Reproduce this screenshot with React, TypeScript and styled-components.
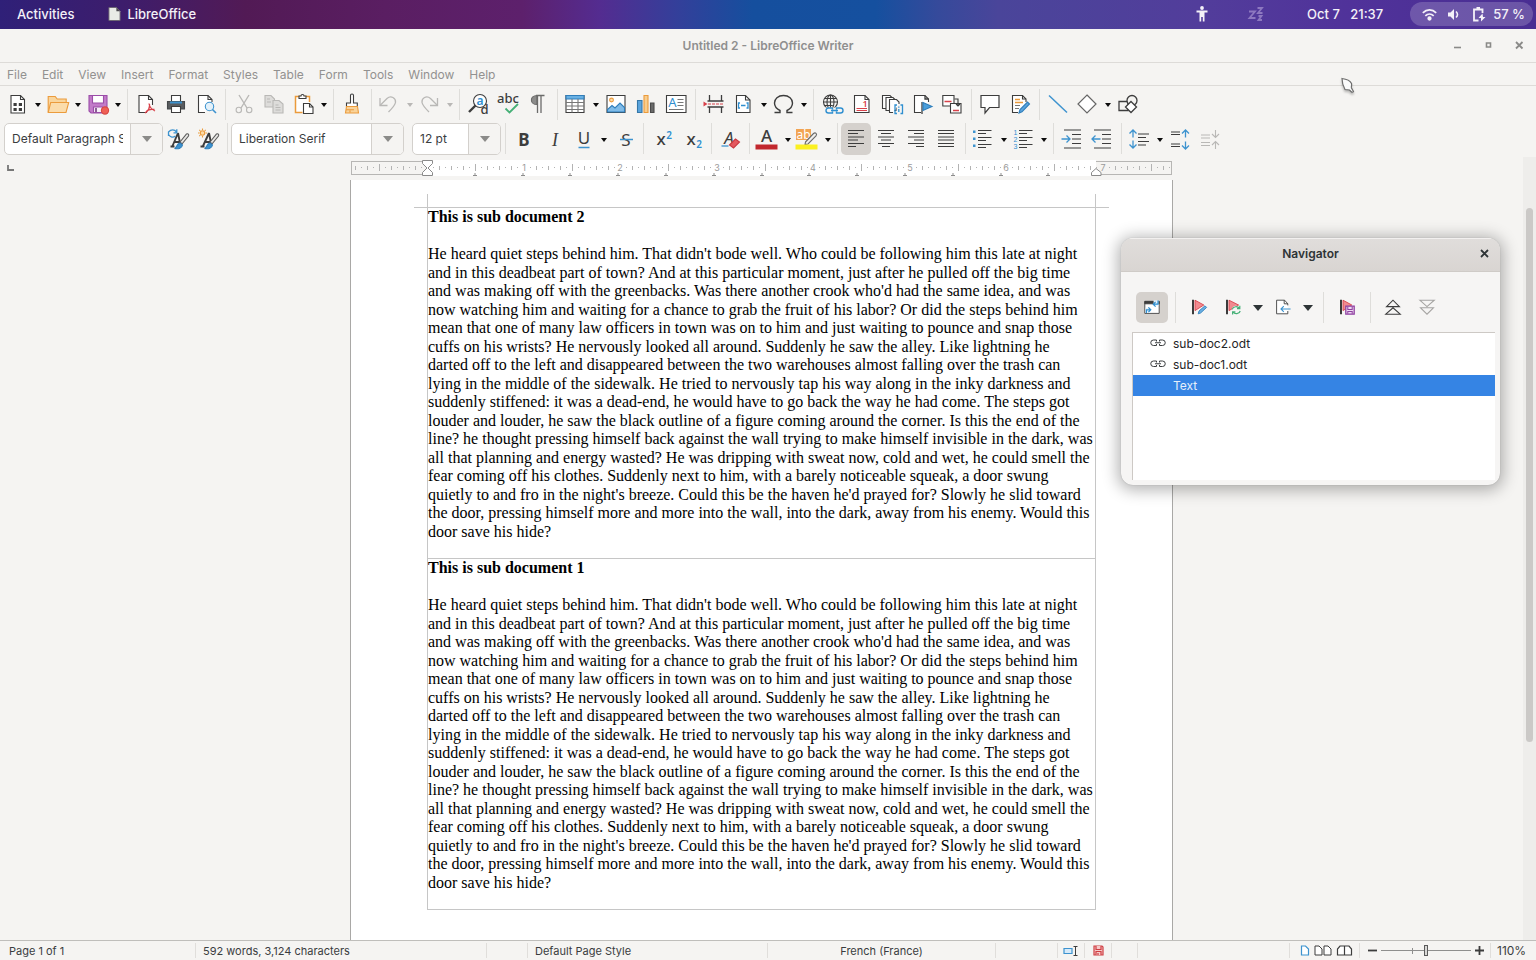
import React from "react";
import styled, { createGlobalStyle } from "styled-components";

const ui = `Inter, "Liberation Sans", sans-serif`;
const ink = "#3d3d3d";
const blue = "#3d93cf";
const red = "#d8414a";
const grey = "#b9b8b6";
const orange = "#eb9b3c";

const Global = createGlobalStyle`
  * { box-sizing: border-box; }
  html, body, #root { height: 100%; }
  body { margin: 0; overflow: hidden; font-family: ${ui}; background: #f5f4f2; }
  button, input { font-family: inherit; }
  button { border: 0; padding: 0; margin: 0; background: none; color: inherit; }
  svg { display: block; flex: none; overflow: visible; }
  p, h2, ul { margin: 0; padding: 0; }
`;

const Desktop = styled.div`
  position: relative;
  display: flex;
  flex-direction: column;
  height: 100vh;
  overflow: hidden;
`;

/* ---------- Desktop top panel ---------- */

const Panel = styled.header`
  display: flex;
  align-items: center;
  height: 29px;
  padding: 0 3px 1px 17px;
  color: #f4f1f8;
  background: linear-gradient(
    90deg,
    #2f2078 0%,
    #3d1d6c 8%,
    #521a55 16%,
    #5a1e62 25%,
    #5d206c 34%,
    #542c90 39%,
    #343f9a 44%,
    #154f9e 49%,
    #15509f 57%,
    #354a9b 61%,
    #4a459a 65%,
    #523d9b 78%,
    #50329a 88%,
    #492e92 100%
  );
`;

const PanelButton = styled.button<{ $gap?: number }>`
  display: flex;
  align-items: center;
  gap: 6px;
  margin-right: ${(p) => p.$gap ?? 0}px;
  font-size: 13px;
  font-weight: 500;
  white-space: nowrap;
`;

const Spacer = styled.div`
  flex: 1;
`;

const Tray = styled(PanelButton)`
  height: 24px;
  padding: 0 8px 0 12px;
  gap: 7px;
  border-radius: 12px;
  background: rgba(255, 255, 255, 0.19);
`;

/* ---------- Window chrome ---------- */

const TitleBar = styled.div`
  position: relative;
  display: flex;
  align-items: center;
  justify-content: center;
  height: 34px;
  padding-bottom: 1px;
  border-bottom: 1px solid #dddbd8;
  color: #8f8f8f;
  font-size: 12px;
  font-weight: 600;
`;

const WindowButtons = styled.div`
  position: absolute;
  right: 10px;
  top: 9px;
  display: flex;
  gap: 17px;
`;

const MenuBar = styled.nav`
  display: flex;
  align-items: center;
  gap: 15px;
  height: 23px;
  padding: 1px 0 0 7px;
  border-bottom: 1px solid #dddbd8;
  color: #929190;
`;

const MenuItem = styled.button`
  font-size: 12px;
  line-height: 20px;
`;

const Toolbar = styled.div<{ $height: number; $start: number; $bottom?: number }>`
  display: flex;
  align-items: center;
  height: ${(p) => p.$height}px;
  padding: 0 0 ${(p) => p.$bottom ?? 0}px ${(p) => p.$start}px;
`;

const ToolButton = styled.button<{ $active?: boolean }>`
  display: flex;
  align-items: center;
  justify-content: center;
  flex: none;
  width: 30px;
  height: 32px;
  border-radius: 5px;
  background: ${(p) => (p.$active ? "#d5d1cd" : "none")};
`;

const ArrowButton = styled.button<{ $dim?: boolean; $wide?: boolean }>`
  display: flex;
  align-items: center;
  justify-content: center;
  flex: none;
  width: ${(p) => (p.$wide ? 16 : 10)}px;
  height: 32px;
  padding-top: 2px;
  color: ${(p) => (p.$dim ? grey : p.$wide ? "#2e3436" : "#0c0c0c")};
`;

const Rule = styled.span<{ $width?: number }>`
  flex: none;
  width: ${(p) => p.$width ?? 8}px;
  height: 31px;
  background: linear-gradient(#deddda, #deddda) center / 1px 100% no-repeat;
`;

const Combo = styled.div<{ $width: number; $gap?: number }>`
  display: flex;
  flex: none;
  width: ${(p) => p.$width}px;
  height: 32px;
  margin-right: ${(p) => p.$gap ?? 0}px;
  border: 1px solid #d3d0cc;
  border-radius: 5px;
  background: #fff;
  overflow: hidden;
`;

const ComboInput = styled.input`
  flex: 1;
  min-width: 0;
  border: 0;
  outline: 0;
  padding: 0 7px;
  font-size: 12px;
  color: #3a3d3f;
  background: transparent;
`;

const ComboDrop = styled.button`
  display: flex;
  align-items: center;
  justify-content: center;
  width: 32px;
  border-left: 1px solid #d3d0cc;
  color: #8b8b89;
  background: #f5f4f2;
`;

/* ---------- Work area ---------- */

const WorkArea = styled.main`
  display: flex;
  flex: 1;
  min-height: 0;
`;

const Canvas = styled.div`
  position: relative;
  display: flex;
  flex: 1;
  flex-direction: column;
  align-items: center;
  min-width: 0;
  padding-top: 3px;
  overflow: hidden;
`;

const TabStop = styled.button`
  position: absolute;
  left: 7px;
  top: 8px;
`;

const RulerRow = styled.div`
  height: 20px;
`;

const Page = styled.article`
  flex: 1 0 auto;
  width: 823px;
  padding: 14px 63px 0;
  border: 1px solid #a9a8a6;
  border-width: 0 1px;
  background: #fff;
`;

const MarginCorners = styled.div`
  height: 13px;
  margin: 0 13px;
  border: 1px solid #c6c6c6;
  border-width: 0 1px;
`;

const MarginLine = styled.div`
  height: 1px;
  background: #c6c6c6;
`;

const Section = styled.section`
  display: grid;
  grid-auto-rows: 1fr;
  min-height: 351px;
  margin: 0 13px;
  padding-bottom: 17px;
  border: 1px solid #c6c6c6;
  border-top: 0;
  font-family: "Liberation Serif", serif;
  font-size: 16px;
  line-height: 18px;
  color: #000;
  white-space: nowrap;
`;

const Heading = styled.h2`
  font-size: 16px;
  font-weight: bold;
`;

const Paragraph = styled.p`
  display: contents;
`;

const Line = styled.span`
  display: block;
`;

const ScrollTrack = styled.div`
  width: 13px;
  padding: 51px 3px 0;
  background: #eeedeb;
`;

const ScrollThumb = styled.div`
  height: 534px;
  border-radius: 4px;
  background: #cbc9c7;
`;

/* ---------- Status bar ---------- */

const StatusBar = styled.footer`
  display: flex;
  align-items: center;
  height: 20px;
  border-top: 1px solid #bfbebb;
  color: #3a3d3f;
  font-size: 11px;
  white-space: nowrap;
`;

const StatusCell = styled.div<{ $w: number; $grow?: boolean; $center?: boolean; $pad?: number }>`
  display: flex;
  align-items: center;
  justify-content: ${(p) => (p.$center ? "center" : "flex-start")};
  flex: ${(p) => (p.$grow ? 1 : 0)} 0 ${(p) => p.$w}px;
  height: 15px;
  padding-left: ${(p) => p.$pad ?? 0}px;
  border-right: 1px solid #e0dedb;

  &:last-child {
    border-right: 0;
    font-size: 12px;
  }
`;

const ViewButton = styled.button<{ $gap?: number }>`
  margin-right: ${(p) => p.$gap ?? 0}px;
`;

const Zoom = styled.input`
  appearance: none;
  width: 90px;
  height: 12px;
  margin: 0 4px;
  background:
    linear-gradient(#8f8f8e, #8f8f8e) 31px center / 1px 6px no-repeat,
    linear-gradient(#8f8f8e, #8f8f8e) center / 100% 1px no-repeat;

  &::-webkit-slider-thumb {
    appearance: none;
    width: 4px;
    height: 11px;
    border: 1px solid #5a5a5a;
    background: #d9d8d6;
  }
`;

/* ---------- Navigator ---------- */

const Navigator = styled.aside`
  position: absolute;
  right: 36px;
  top: 238px;
  width: 379px;
  height: 247px;
  display: flex;
  flex-direction: column;
  border-radius: 12px;
  background: #f6f5f4;
  box-shadow: 0 2px 16px 3px rgba(0, 0, 0, 0.3), 0 0 1px rgba(0, 0, 0, 0.3);
  overflow: hidden;
`;

const NavTitle = styled.div`
  display: grid;
  grid-template-columns: 32px 1fr 32px;
  align-items: center;
  justify-items: center;
  flex: none;
  height: 34px;
  padding-bottom: 3px;
  border-bottom: 1px solid #cfcbc7;
  border-top: 1px solid #f2f0ef;
  background: linear-gradient(#e0dddb, #d9d5d2);
  color: #2e3436;
  font-size: 12px;
  font-weight: 600;
`;

const NavTools = styled.div`
  display: flex;
  align-items: center;
  height: 60px;
  padding: 10px 0 0 15px;
`;

const NavToolButton = styled(ToolButton)<{ $narrow?: boolean }>`
  width: ${(p) => (p.$narrow ? 34 : 32)}px;
  height: 31px;
`;

const NavList = styled.ul`
  flex: 1;
  margin: 0 5px 5px 11px;
  border: 1px solid #cdc9c5;
  border-width: 1px 0 0 1px;
  background: #fff;
  list-style: none;
`;

const NavRow = styled.li<{ $selected?: boolean }>`
  display: grid;
  grid-template-columns: 16px auto;
  justify-content: start;
  align-items: center;
  gap: 7px;
  height: 21px;
  padding: 0 0 1px 17px;
  font-size: 12px;
  color: ${(p) => (p.$selected ? "#e6effb" : "#1f2426")};
  background: ${(p) => (p.$selected ? "#3584e4" : "transparent")};
`;

const Pointer = styled.div`
  position: absolute;
  right: 181px;
  top: 77px;
  filter: drop-shadow(0 2px 1px rgba(0, 0, 0, 0.25));
`;

/* ---------- Icons ---------- */

const Icon = ({ children, size = 20 }: { children: React.ReactNode; size?: number }) => (
  <svg width={size} height={size} viewBox="0 0 20 20" fill="none" stroke={ink} strokeWidth="1.1" aria-hidden="true">
    {children}
  </svg>
);

const Arrow = ({ width = 6, height = 4 }: { width?: number; height?: number }) => (
  <svg width={width} height={height} viewBox="0 0 10 6" preserveAspectRatio="none" fill="currentColor" aria-hidden="true">
    <path d="M0 0h10L5 6z" />
  </svg>
);

const Glyph = ({ x, y, size, fill = ink, weight, italic, children, family = "Noto Sans" }: {
  x: number; y: number; size: number; fill?: string; weight?: number; italic?: boolean; children: string; family?: string;
}) => (
  <text x={x} y={y} fontSize={size} fill={fill} stroke="none" fontWeight={weight} fontStyle={italic ? "italic" : undefined} fontFamily={`"${family}", sans-serif`} textAnchor="middle">
    {children}
  </text>
);

const icons: Record<string, React.ReactNode> = {
  new: (
    <>
      <path d="M3 1.5h9.500l4 4v13.500H3z" fill="#fff" />
      <path d="M12.500 1.500v4h4" />
      <path d="M5.500 9h3.200v3H5.500zM10.800 9H14v3h-3.200zM5.500 14h3.200v3H5.500zM10.800 14H14v3h-3.200z" fill={ink} stroke="none" />
    </>
  ),
  open: (
    <>
      <path d="M.2 18V2.500h7l2 2.500h9v3" fill="#f9d59c" stroke={orange} />
      <path d="M.2 18.500l2.500-10h18L18 18.500z" fill="#fbdcab" stroke={orange} />
    </>
  ),
  save: (
    <>
      <path d="M1 1.500h18v17.500H3l-2-2z" fill="#c27bc9" stroke="#9b4ea8" />
      <path d="M4.500 1.500h11v7.500h-11z" fill="#fff" stroke="#9b4ea8" />
      <path d="M5.500 13h9v5.500h-9z" fill="#f7eef8" stroke="#9b4ea8" />
      <path d="M8 14v4" stroke="#703a7c" strokeWidth="1.600" />
      <circle cx="17" cy="16.500" r="3.600" fill="#ef5f56" stroke="#d94841" />
    </>
  ),
  pdf: (
    <>
      <path d="M11 18.500H3v-17h9.500l4 4V11" fill="#fff" />
      <path d="M12.500 1.500v4h4" />
      <path d="M13 9.500c.5 3 2.500 6 6 7.500M13.500 10c.5 3.500-1.500 7-4.500 9M10.500 17c2.500-2 5-2 8-1.500" stroke={red} strokeWidth="1.300" />
    </>
  ),
  print: (
    <>
      <path d="M5.500 7.500V1.500h9v6" fill="#fff" />
      <path d="M1.500 7.500h17v7.500h-17z" fill="#5a5d60" stroke="#45484a" />
      <path d="M4 8.500h12" stroke={blue} strokeWidth="2" />
      <path d="M5.500 12.500h9v6h-9z" fill="#fff" />
    </>
  ),
  preview: (
    <>
      <path d="M9 18.500H2.500v-17h9.500l4 4V8" fill="#fff" />
      <path d="M12 1.500v4h4" />
      <circle cx="13.500" cy="12.500" r="4.200" fill="#e3f1fa" stroke={blue} />
      <path d="M16.500 15.500l3.500 3.500" stroke={blue} strokeWidth="1.600" />
    </>
  ),
  cut: (
    <g stroke={grey}>
      <path d="M5 1l8 13M15 1L7 14" strokeWidth="1.400" />
      <circle cx="4.800" cy="16" r="2.700" />
      <circle cx="15.200" cy="16" r="2.700" />
    </g>
  ),
  copy: (
    <g stroke={grey} fill="#dddcda">
      <path d="M1 1.500h6l3.500 3.500v8H1z" />
      <path d="M9 6.500h6l4 3.500v9H9z" />
      <path d="M3 5h3M3 8h4M11.500 11h3M11.500 13.500h5M11.500 16h5" />
    </g>
  ),
  paste: (
    <>
      <path d="M8.500 18.500H1.500v-16h14V8" fill="#fff" stroke={orange} strokeWidth="1.500" />
      <path d="M5 4.500V2h2c0-2 3-2 3 0h2v2.500z" fill="#fff" />
      <path d="M9.500 9.500h6l3.500 3.500v6.500H9.500z" fill="#fff" />
      <path d="M15.500 9.500V13H19" />
    </>
  ),
  brush: (
    <>
      <path d="M8.500 9V1.500c0-2 3-2 3 0V9h3.800v3.500H4.500V9z" fill="#fff" />
      <path d="M4.500 12.500l-1 6.500h13l-1-6.500z" fill="#f9d39a" stroke={orange} />
      <path d="M4 15.800h8M8 18.500v-2" stroke={orange} />
    </>
  ),
  undo: (
    <g stroke={grey} strokeWidth="1.300">
      <path d="M0 4v7.500h7.500" />
      <path d="M0 11.500L7 4.500c4-3.500 9-.5 8.500 4-.5 3-3.500 6-7 9.500" />
    </g>
  ),
  redo: (
    <g stroke={grey} strokeWidth="1.300">
      <path d="M17.500 4v7.500H10" />
      <path d="M17.500 11.500l-7-7c-4-3.500-9-.5-8.500 4 .5 3 3.500 6 7 9.500" />
    </g>
  ),
  find: (
    <>
      <circle cx="12" cy="7" r="6.500" fill="#fff" />
      <path d="M7.500 11.500L1 18" strokeWidth="2.400" />
      <Glyph x={12} y={10.500} size={12} fill="#2f8fd0" weight={600}>a</Glyph>
      <Glyph x={16.500} y={19.500} size={13} weight={500}>d</Glyph>
    </>
  ),
  spell: (
    <>
      <Glyph x={10} y={8.500} size={13} weight={500}>abc</Glyph>
      <path d="M7.500 14.500l4 4 8.500-8.500" stroke="#45b076" strokeWidth="1.800" />
    </>
  ),
  pilcrow: (
    <>
      <path d="M9 10.500C1.500 10.500 1.500 1.500 9 1.500z" fill="#8c8c8b" stroke="#6b6b6a" />
      <path d="M9.500 19V1.500M13 19V1.500M8 1.500h8.500" stroke="#6b6b6a" strokeWidth="1.300" />
    </>
  ),
  table: (
    <>
      <path d="M0 1.500h18v17H0z" fill="#fff" />
      <path d="M0 1.500h18v3.500H0z" fill="#68b0e3" stroke="#2f7ebb" />
      <path d="M0 8.500h18M0 12h18M0 15.500h18M6 5v13.500M12 5v13.500" stroke="#777" />
    </>
  ),
  image: (
    <>
      <path d="M1 1.500h18v17H1z" fill="#fff" />
      <circle cx="5.500" cy="6" r="1.900" fill="#fbdcab" stroke={orange} />
      <path d="M1.500 18v-2.500l4.500-4 3 2.500 5-5 4.500 4.500V18z" fill="#7fbbe8" stroke="#2f7ebb" />
    </>
  ),
  chart: (
    <>
      <path d="M1.500 6.500h4.500v12H1.500z" fill="#5ba4dd" stroke="#3577a8" />
      <path d="M8 1.500h4v17H8z" fill="#f9cd8c" stroke={orange} />
      <path d="M14.500 9h3.500v9.500h-3.500z" fill="#6a6a6a" stroke="#4a4a4a" />
    </>
  ),
  textbox: (
    <>
      <path d="M.5 1.500h19.500v17H.5z" fill="#fff" />
      <Glyph x={6.500} y={13} size={13} fill="#2f8fd0">A</Glyph>
      <path d="M11.500 5.500h6M11.500 8.500h6M11.500 11.500h6M3 15.500h14.500" stroke="#777" />
    </>
  ),
  pagebreak: (
    <>
      <path d="M5.500 1v6h12V1M5.500 19v-6h12v6M3.500 7h16M3.500 13h16" strokeWidth="1.300" />
      <path d="M4 10h16" stroke={red} strokeDasharray="3 1" />
      <path d="M-.5 7.500v5L3.500 10z" fill={red} stroke="none" />
    </>
  ),
  field: (
    <>
      <path d="M2.500 1.500h9l4.500 4.500v12.500H2.500z" fill="#fff" />
      <path d="M11.500 1.500V6H16" />
      <path d="M6 9H4.500v5H6M12.500 9H14v5h-1.500M7 11.500h4.500" stroke="#2f8fd0" strokeWidth="1.300" />
    </>
  ),
  omega: (
    <path d="M.5 18.500H6v-2C2 14.500.5 12 .5 9 .5 5 4 1.500 9.500 1.500S18.500 5 18.500 9c0 3-1.500 5.500-5.500 7.500v2h5.500" strokeWidth="1.400" />
  ),
  link: (
    <>
      <circle cx="8.500" cy="8" r="7" />
      <path d="M8.500 1v13.500M1.500 8h14M2.800 4.500h11.500M2.800 11.500h8" />
      <ellipse cx="8.500" cy="8" rx="3.500" ry="7" />
      <path d="M3 13.500h18v6H3z" fill="#f5f4f2" stroke="none" />
      <path d="M10.500 14h-4a2.500 2.500 0 000 5h4v-1.500M10.500 14v1.500M9 16.500h7M14.500 15.500V14h4a2.500 2.500 0 010 5h-4v-1.500" stroke="#2f8fd0" strokeWidth="1.400" />
    </>
  ),
  footnote: (
    <>
      <path d="M2.500 1.500h10.500l4 4v13H2.500z" fill="#fff" />
      <path d="M13 1.500v4h4" />
      <Glyph x={13} y={13} size={9} fill={red} weight={600}>1</Glyph>
      <path d="M4.500 14.500h10.500M4.500 16.500h10.500" stroke={red} />
    </>
  ),
  endnote: (
    <>
      <path d="M.5 1.500h7.500l3 3v10H.5z" fill="#fff" />
      <path d="M4 3.500h7l3 3v10H4z" fill="#fff" />
      <path d="M11 18.500H7.500v-13h7l2.500 2.500v2" fill="#fff" />
      <path d="M15 11h-2v8.500h2M18.500 11h2v8.500h-2M16.800 12.500v1.200M16.800 15v3" stroke="#2f8fd0" strokeWidth="1.300" />
    </>
  ),
  bookmark: (
    <>
      <path d="M9 18.500H2.500v-17h10.500l3.500 3.500v3" fill="#fff" />
      <path d="M13 1.500V5h3.500M10 8v12" strokeWidth="1.300" />
      <path d="M11 8.500l9 4-9 4z" fill="#4a9edb" stroke="#2f7ebb" />
    </>
  ),
  crossref: (
    <>
      <path d="M.8 1.500H12v10.500H.8z" fill="#fff" />
      <path d="M8.500 9.500H19V19H8.500z" fill="#fff" />
      <path d="M2.500 7.500h7M11 16.500h6" stroke={red} strokeWidth="1.500" />
      <path d="M12.500 5h3.500v6M14 10l2 2 2-2" />
    </>
  ),
  comment: <path d="M1 1.500h18v12h-9.500L5 19v-5.500H1z" fill="#fff" strokeWidth="1.200" />,
  track: (
    <>
      <path d="M8 18.500H2.500v-17h10l3.500 3.500v3" fill="#fff" />
      <path d="M12.500 1.500V5h3.500" />
      <path d="M5 5.500h5M5 8.500h8" stroke={orange} strokeWidth="1.300" />
      <path d="M5 11.500h5M5 14.500h4" stroke="#777" />
      <path d="M9 19l1-3.500 7.500-7.500 2 2-7.500 7.800z" fill="#5ba4dd" stroke="#2f7ebb" />
    </>
  ),
  line: <path d="M1 1.500l18 17" stroke={blue} strokeWidth="1.500" />,
  diamond: <path d="M9 1l9 9-9 9-9-9z" fill="#fff" stroke="#666" strokeWidth="1.200" />,
  shapes: (
    <>
      <path d="M1 7.500h9v9H1z" fill="#f5f4f2" strokeWidth="1.300" />
      <circle cx="14" cy="6.500" r="5" fill="#f5f4f2" strokeWidth="1.300" />
      <path d="M13 7.500l5.500 5.500-5.500 5.500L7.500 13z" fill="#fff" strokeWidth="1.300" />
    </>
  ),
  updateStyle: (
    <>
      <path d="M10 4L4.500 17M10 4l2 10M6 13h5M2.500 17.500h4" strokeWidth="1.900" />
      <path d="M.5 7V3C3 .200 6.500 .200 8.500 3M8.800.200V3.800H5.500M.5 5.500c2 3 4.500 3.500 7 1.500" stroke={blue} strokeWidth="1.300" />
      <path d="M12 13l6.500-8c2-1 2.500 1 2 2l-6.500 8z" fill="#e7e6e4" stroke="#5b5b5b" />
      <path d="M6.500 19.500c2 0 2-5 5.500-5.500l2.500 2c-.5 3-4 4.500-8 3.500z" fill="#3d93cf" stroke="#2f7ebb" />
    </>
  ),
  newStyle: (
    <>
      <path d="M11 4L5 17M11 4l2 10M7 13h5M2.500 17.500h4" strokeWidth="1.900" />
      <circle cx="4.500" cy="4" r="2.200" fill="#fbdcab" stroke={orange} />
      <path d="M4.500-.5V1M4.500 7v1.500M0 4h1.500M7.500 4H9M1.300.800l1 1M7.700.800l-1 1M1.300 7.200l1-1" stroke={orange} />
      <path d="M12 13l6.500-8c2-1 2.500 1 2 2l-6.500 8z" fill="#e7e6e4" stroke="#5b5b5b" />
      <path d="M6.500 19.500c2 0 2-5 5.500-5.500l2.500 2c-.5 3-4 4.500-8 3.500z" fill="#3d93cf" stroke="#2f7ebb" />
    </>
  ),
  bold: <Glyph x={10} y={16.500} size={17} weight={700}>B</Glyph>,
  italic: <Glyph x={11} y={16.500} size={18} italic family="Liberation Serif">I</Glyph>,
  underline: (
    <>
      <Glyph x={10} y={15} size={17}>U</Glyph>
      <path d="M4.500 18.500h11" stroke={blue} strokeWidth="1.500" />
    </>
  ),
  strike: (
    <>
      <Glyph x={12} y={16.500} size={17}>S</Glyph>
      <path d="M6 10.500h13" stroke={blue} strokeWidth="1.500" />
    </>
  ),
  superscript: (
    <>
      <Glyph x={9} y={15.500} size={17} weight={500}>x</Glyph>
      <Glyph x={17} y={9.500} size={10} fill="#2f8fd0" weight={600}>2</Glyph>
    </>
  ),
  subscript: (
    <>
      <Glyph x={9} y={15.500} size={17} weight={500}>x</Glyph>
      <Glyph x={17} y={18.500} size={10} fill="#2f8fd0" weight={600}>2</Glyph>
    </>
  ),
  clear: (
    <>
      <Glyph x={9} y={15} size={17} italic>A</Glyph>
      <path d="M1.500 17h7" stroke={blue} strokeWidth="1.300" />
      <path d="M9.500 16l6-6 4 3-6 6z" fill="#e4595f" stroke="#c93a42" />
    </>
  ),
  fontColor: (
    <>
      <Glyph x={8.500} y={12.500} size={17} weight={500}>A</Glyph>
      <path d="M-2.500 15.500h22v5h-22z" fill="#c1272d" stroke="none" />
    </>
  ),
  highlight: (
    <>
      <path d="M-2 0h15v11H-2z" fill="#f2a452" stroke="none" />
      <Glyph x={5.500} y={9.500} size={12} fill="#fff">ab</Glyph>
      <path d="M7.500 13l8-8.500c2-1.500 4 .5 2.500 2.500l-8 8-3 .500z" fill="#f0efed" stroke="#6a6a6a" />
      <path d="M-2.500 15.500h22v5h-22z" fill="#fbf021" stroke="none" />
    </>
  ),
  alignLeft: <path d="M2 1.500h16M2 4.500h10M2 8h16M2 11h10M2 14.500h16M2 17.500h8" />,
  alignCenter: <path d="M2 1.500h16M5 4.500h10M2 8h16M5 11h10M2 14.500h16M6 17.500h8" />,
  alignRight: <path d="M2 1.500h16M8 4.500h10M2 8h16M8 11h10M2 14.500h16M10 17.500h8" />,
  justify: <path d="M2 1.500h16M2 4.500h16M2 8h16M2 11h16M2 14.500h16M2 17.500h16" />,
  bullets: (
    <>
      <path d="M4 1.500h13.500M4 4.500h8M4 8.500h13.500M4 11.500h8M4 15.500h13.500M4 18.500h8" />
      <path d="M-1 1.500h2.500v2.500H-1zM-1 8.500h2.500V11H-1zM-1 15.500h2.500V18H-1z" fill={blue} stroke="none" />
    </>
  ),
  numbers: (
    <>
      <path d="M5 1.500h13.500M5 4.500h8M5 8.500h13.500M5 11.500h8M5 15.500h13.500M5 18.500h8" />
      <Glyph x={1.500} y={5.500} size={7} fill="#2f8fd0" family="Liberation Sans">1</Glyph>
      <Glyph x={1.500} y={12.500} size={7} fill="#2f8fd0" family="Liberation Sans">2</Glyph>
      <Glyph x={1.500} y={19.500} size={7} fill="#2f8fd0" family="Liberation Sans">3</Glyph>
    </>
  ),
  indent: (
    <>
      <path d="M2 1h17M10 5.500h9M10 10h9M10 14.500h9M2 19h17" />
      <path d="M-.5 10H8M4.500 6.500L8 10l-3.500 3.500" stroke={blue} strokeWidth="1.300" />
    </>
  ),
  outdent: (
    <>
      <path d="M2 1h17M10 5.500h9M10 10h9M10 14.500h9M2 19h17" />
      <path d="M8.500 10H0M3.500 6.500L0 10l3.500 3.500" stroke={blue} strokeWidth="1.300" />
    </>
  ),
  lineSpacing: (
    <>
      <path d="M8 5h11M8 8.500h8M8 12.500h11M8 16h8" />
      <path d="M3 8.500V1M-.5 4.500L3 1l3.500 3.500M3 11.500V19M-.5 15.500L3 19l3.500-3.500" stroke={blue} strokeWidth="1.300" />
    </>
  ),
  spaceUp: (
    <>
      <path d="M1 3h9M1 5.500h9M1 15h9M1 17.500h9" />
      <path d="M15.500 8.500V1M12 4.500L15.500 1 19 4.500M15.500 12.500V20M12 16.500l3.500 3.500 3.500-3.500" stroke={blue} strokeWidth="1.300" />
    </>
  ),
  spaceDown: (
    <g stroke={grey}>
      <path d="M1 6h9M1 9h9M1 13.500h9M1 16.500h9" />
      <path d="M15.500 1v7.500M12 5l3.500 3.500L19 5M15.500 20v-7.500M12 16l3.500-3.500L19 16" />
    </g>
  ),
  toggleMaster: (
    <>
      <path d="M1 3h18v15H1z" fill="#fff" />
      <path d="M1 3h18v3H1z" fill={ink} />
      <path d="M12 1.500h6v7h-6zM2 11h6v6.500H2z" fill="#e6f2fb" stroke="none" />
      <path d="M17.500 2v4.500H12M14.500 3.500L11.500 6.500l3 3M3 17.500V13.500h5M5.500 10.500l3 3-3 3" stroke="#2f8fd0" strokeWidth="1.500" />
    </>
  ),
  navEdit: (
    <>
      <path d="M2.500 1v18" stroke="#222" strokeWidth="2.200" />
      <path d="M5 1.500l11 6-11 7z" fill="#f08a8f" stroke={red} />
      <path d="M9 18.500l1-3.500 7.500-6.500 2 2-7.500 7z" fill="#6bb0e3" stroke="#2f7ebb" />
    </>
  ),
  navUpdate: (
    <>
      <path d="M2.500 1v18" stroke="#222" strokeWidth="2.200" />
      <path d="M5 1.500l12 6-12 7z" fill="#f08a8f" stroke={red} />
      <circle cx="14" cy="14" r="5.500" fill="#f6f5f4" stroke="none" />
      <path d="M9 13c1-4 7-4.500 9-1M18.500 8.500V12H15M19 15c-1 4-7 4.500-9 1M9.500 19.500V16H13" stroke="#45b076" strokeWidth="1.500" />
    </>
  ),
  navInsert: (
    <>
      <path d="M16 8V6l-4-4.500H2v17h14V15" fill="#fff" />
      <path d="M11.500 1.500V6H16" />
      <path d="M19.500 12.500H7.500M11 9l-3.500 3.500L11 16" stroke={blue} strokeWidth="1.400" />
    </>
  ),
  navSave: (
    <>
      <path d="M2.500 1v18" stroke="#222" strokeWidth="2.200" />
      <path d="M5 1.500l11 6-11 7z" fill="#f08a8f" stroke={red} />
      <path d="M8.500 9h10.500v10H8.500z" fill="#eed9f1" stroke="#8e3fa0" strokeWidth="1.600" />
      <path d="M11 9.500v3.500h5.500V9.500M11 18.500v-3h5.500v3" stroke="#8e3fa0" strokeWidth="1.300" />
    </>
  ),
  moveUp: <path d="M2 9.500L10 1.500l8 8zM1 19L10 11l9 8z" strokeWidth="1.400" />,
  moveDown: <path d="M1 1.500L10 9.500l9-8zM2 11l8 8 8-8z" stroke="#a5a4a2" strokeWidth="1.400" />,
};

type Item = { id: string; label: string; arrow?: boolean; dim?: boolean; active?: boolean } | "|";

const standardTools: Item[] = [
  { id: "new", label: "New", arrow: true },
  { id: "open", label: "Open", arrow: true },
  { id: "save", label: "Save", arrow: true },
  "|",
  { id: "pdf", label: "Export as PDF" },
  { id: "print", label: "Print" },
  { id: "preview", label: "Print Preview" },
  "|",
  { id: "cut", label: "Cut" },
  { id: "copy", label: "Copy" },
  { id: "paste", label: "Paste", arrow: true },
  "|",
  { id: "brush", label: "Clone Formatting" },
  "|",
  { id: "undo", label: "Undo", arrow: true, dim: true },
  { id: "redo", label: "Redo", arrow: true, dim: true },
  "|",
  { id: "find", label: "Find & Replace" },
  { id: "spell", label: "Spelling" },
  { id: "pilcrow", label: "Formatting Marks" },
  "|",
  { id: "table", label: "Insert Table", arrow: true },
  { id: "image", label: "Insert Image" },
  { id: "chart", label: "Insert Chart" },
  { id: "textbox", label: "Insert Text Box" },
  "|",
  { id: "pagebreak", label: "Insert Page Break" },
  { id: "field", label: "Insert Field", arrow: true },
  { id: "omega", label: "Insert Special Character", arrow: true },
  "|",
  { id: "link", label: "Insert Hyperlink" },
  { id: "footnote", label: "Insert Footnote" },
  { id: "endnote", label: "Insert Endnote" },
  { id: "bookmark", label: "Insert Bookmark" },
  { id: "crossref", label: "Insert Cross-reference" },
  "|",
  { id: "comment", label: "Insert Comment" },
  { id: "track", label: "Track Changes" },
  "|",
  { id: "line", label: "Insert Line" },
  { id: "diamond", label: "Basic Shapes", arrow: true },
  { id: "shapes", label: "Show Draw Functions" },
];

const formatTools: Item[] = [
  "|",
  { id: "bold", label: "Bold" },
  { id: "italic", label: "Italic" },
  { id: "underline", label: "Underline", arrow: true },
  { id: "strike", label: "Strikethrough" },
  "|",
  { id: "superscript", label: "Superscript" },
  { id: "subscript", label: "Subscript" },
  "|",
  { id: "clear", label: "Clear Formatting" },
  "|",
  { id: "fontColor", label: "Font Color", arrow: true },
  { id: "highlight", label: "Highlighting", arrow: true },
  "|",
  { id: "alignLeft", label: "Align Left", active: true },
  { id: "alignCenter", label: "Align Center" },
  { id: "alignRight", label: "Align Right" },
  { id: "justify", label: "Justified" },
  "|",
  { id: "bullets", label: "Bullets", arrow: true },
  { id: "numbers", label: "Numbering", arrow: true },
  "|",
  { id: "indent", label: "Increase Indent" },
  { id: "outdent", label: "Decrease Indent" },
  "|",
  { id: "lineSpacing", label: "Line Spacing", arrow: true },
  { id: "spaceUp", label: "Increase Paragraph Spacing" },
  { id: "spaceDown", label: "Decrease Paragraph Spacing" },
];

const Tools = ({ items }: { items: Item[] }) => (
  <>
    {items.map((item, i) =>
      item === "|" ? (
        <Rule key={i} />
      ) : (
        <React.Fragment key={item.id}>
          <ToolButton aria-label={item.label} $active={item.active}>
            <Icon>{icons[item.id]}</Icon>
          </ToolButton>
          {item.arrow && (
            <ArrowButton aria-label={`${item.label} options`} $dim={item.dim}>
              <Arrow />
            </ArrowButton>
          )}
        </React.Fragment>
      )
    )}
  </>
);

const ComboBox = ({ label, value, width, gap }: { label: string; value: string; width: number; gap?: number }) => (
  <Combo $width={width} $gap={gap}>
    <ComboInput aria-label={label} defaultValue={value} />
    <ComboDrop aria-label={`${label} list`}>
      <Arrow width={10} height={6} />
    </ComboDrop>
  </Combo>
);

/* Horizontal ruler: one inch is 96.5 units, with eighth ticks and sixteenth dots. */
const INCH = 96.5;
const ORIGIN = 76;
const sixteenths = Array.from({ length: 137 }, (_, i) => i - 12).filter((n) => {
  const x = ORIGIN + (n * INCH) / 16;
  return n !== 0 && x > 3 && x < 818;
});

const Ruler = () => (
  <svg width="821" height="18" viewBox="0 0 821 18" aria-hidden="true">
    <rect x="0.5" y="1.500" width="820" height="13" fill="#f5f4f2" stroke="#b7b6b4" />
    <rect x={ORIGIN} y="0" width="669" height="16" fill="#fff" />
    {sixteenths.map((n) => {
      const x = Math.round(ORIGIN + (n * INCH) / 16);
      if (n > 0 && n % 16 === 0) {
        return (
          <text key={n} x={x} y="11" fontSize="9" fill="#9b9b9b" textAnchor="middle" fontFamily={ui}>
            {n / 16}
          </text>
        );
      }
      const h = n % 8 === 0 ? 7 : n % 2 === 0 ? 4 : 1;
      return <rect key={n} x={x} y={8 - Math.ceil(h / 2)} width="1" height={h} fill="#b3b3b3" />;
    })}
    {Array.from({ length: 13 }, (_, i) => {
      const x = Math.round(ORIGIN + (i + 1) * 47.8);
      return <path key={i} d={`M${x - 2} 15.500h4M${x} 13v3`} stroke="#8d8d8d" />;
    })}
    <path d="M71.500.500h10v3L77 8l4.500 4.500v3h-10v-3L76 8l-4.500-4.500z" fill="#fff" stroke="#8a8a8a" />
    <path d="M740.500 15.500v-3l4.500-4 5 4v3z" fill="#fff" stroke="#8a8a8a" />
  </svg>
);

const body = [
  "He heard quiet steps behind him. That didn't bode well. Who could be following him this late at night",
  "and in this deadbeat part of town? And at this particular moment, just after he pulled off the big time",
  "and was making off with the greenbacks. Was there another crook who'd had the same idea, and was",
  "now watching him and waiting for a chance to grab the fruit of his labor? Or did the steps behind him",
  "mean that one of many law officers in town was on to him and just waiting to pounce and snap those",
  "cuffs on his wrists? He nervously looked all around. Suddenly he saw the alley. Like lightning he",
  "darted off to the left and disappeared between the two warehouses almost falling over the trash can",
  "lying in the middle of the sidewalk. He tried to nervously tap his way along in the inky darkness and",
  "suddenly stiffened: it was a dead-end, he would have to go back the way he had come. The steps got",
  "louder and louder, he saw the black outline of a figure coming around the corner. Is this the end of the",
  "line? he thought pressing himself back against the wall trying to make himself invisible in the dark, was",
  "all that planning and energy wasted? He was dripping with sweat now, cold and wet, he could smell the",
  "fear coming off his clothes. Suddenly next to him, with a barely noticeable squeak, a door swung",
  "quietly to and fro in the night's breeze. Could this be the haven he'd prayed for? Slowly he slid toward",
  "the door, pressing himself more and more into the wall, into the dark, away from his enemy. Would this",
  "door save his hide?",
];

const SubDocument = ({ title }: { title: string }) => (
  <Section>
    <Heading>{title}</Heading>
    <Line />
    <Paragraph>
      {body.map((line) => (
        <Line key={line}>{line} </Line>
      ))}
    </Paragraph>
  </Section>
);

const LinkIcon = () => (
  <svg width="16" height="12" viewBox="0 0 16 12" fill="none" stroke="#3a3d3f" aria-hidden="true">
    <path d="M6.500 4.500V3H3.500a2.500 2.500 0 000 5.500h3V7M9.500 4.500V3h3a2.500 2.500 0 010 5.500h-3V7M5 5.750h6" />
  </svg>
);

const menus = ["File", "Edit", "View", "Insert", "Format", "Styles", "Table", "Form", "Tools", "Window", "Help"];

export default function App() {
  return (
    <Desktop>
      <Global />
      <Panel>
        <PanelButton $gap={34}>Activities</PanelButton>
        <PanelButton>
          <svg width="13" height="16" viewBox="0 0 14 16" aria-hidden="true">
            <path d="M1 1h8l4 4v10H1z" fill="#e9ebe6" stroke="#6b6570" />
            <path d="M9 1l4 4H9z" fill="#4c4a50" />
          </svg>
          LibreOffice
        </PanelButton>
        <Spacer />
        <PanelButton $gap={40} aria-label="Accessibility">
          <svg width="12" height="16" viewBox="0 0 12 16" fill="#f4f1f8" aria-hidden="true">
            <circle cx="6" cy="2" r="1.900" />
            <path d="M.5 4.500h11v2H8.500V15.500H6.800V11H5.200v4.500H3.500v-9h-3z" />
          </svg>
        </PanelButton>
        <PanelButton $gap={43} aria-label="Do not disturb">
          <svg width="16" height="16" viewBox="0 0 16 16" fill="none" stroke="#8d78c0" strokeWidth="1.800" aria-hidden="true">
            <path d="M1 5.500h6L1.500 12H7.500M9.500 2h4.500L10 7h4.500M10.500 10h3L10.500 14h3.500" />
          </svg>
        </PanelButton>
        <PanelButton $gap={27}>Oct 7&nbsp;&nbsp; 21:37</PanelButton>
        <Tray aria-label="System menu">
          <svg width="15" height="13" viewBox="0 0 15 13" fill="none" stroke="#f4f1f8" strokeWidth="1.700" aria-hidden="true">
            <path d="M.8 4.800c4-4 9.400-4 13.400 0M3.300 7.800c2.500-2.400 5.900-2.400 8.400 0" />
            <circle cx="7.500" cy="10.500" r="1.300" fill="#f4f1f8" />
          </svg>
          <svg width="20" height="13" viewBox="0 0 20 13" fill="#f4f1f8" aria-hidden="true">
            <path d="M4 4.500h2.500L10 1v11L6.500 8.500H4z" />
            <path d="M12 3.500c2 1.800 2 4.200 0 6" fill="none" stroke="#f4f1f8" strokeWidth="1.600" />
          </svg>
          <svg width="15" height="16" viewBox="0 0 15 16" fill="none" stroke="#f4f1f8" strokeWidth="1.800" aria-hidden="true">
            <path d="M7.500 14.500H3v-11h8.500v3.500M5.500 2h3.500" />
            <path d="M11.500 7.500L7.500 12H10v3.500L14.500 11H12z" fill="#f4f1f8" stroke="none" />
          </svg>
          57 %
        </Tray>
      </Panel>

      <TitleBar>
        Untitled 2 - LibreOffice Writer
        <WindowButtons>
          <button aria-label="Minimize">
            <svg width="14" height="14" viewBox="0 0 14 14"><path d="M4 9.500h7" stroke="#8a8a88" strokeWidth="1.600" /></svg>
          </button>
          <button aria-label="Restore">
            <svg width="14" height="14" viewBox="0 0 14 14"><path d="M5.500 5h4v4h-4z" fill="none" stroke="#8a8a88" strokeWidth="1.600" /></svg>
          </button>
          <button aria-label="Close">
            <svg width="14" height="14" viewBox="0 0 14 14"><path d="M4 4l6.500 6.500M10.500 4L4 10.500" stroke="#8a8a88" strokeWidth="1.800" /></svg>
          </button>
        </WindowButtons>
      </TitleBar>

      <MenuBar>
        {menus.map((m) => (
          <MenuItem key={m}>{m}</MenuItem>
        ))}
      </MenuBar>

      <Toolbar $height={36} $start={3}>
        <Tools items={standardTools} />
      </Toolbar>
      <Toolbar $height={35} $start={4} $bottom={2}>
        <ComboBox label="Paragraph style" value="Default Paragraph Style" width={159} />
        <Tools
          items={[
            { id: "updateStyle", label: "Update Selected Style" },
            { id: "newStyle", label: "New Style from Selection" },
          ]}
        />
        <Rule />
        <ComboBox label="Font name" value="Liberation Serif" width={173} gap={8} />
        <ComboBox label="Font size" value="12 pt" width={89} />
        <Tools items={formatTools} />
      </Toolbar>

      <WorkArea>
        <Canvas>
          <TabStop aria-label="Tab stop type">
            <svg width="7" height="6" viewBox="0 0 7 6"><path d="M1 0v5h6" fill="none" stroke="#777" strokeWidth="1.800" /></svg>
          </TabStop>
          <RulerRow>
            <Ruler />
          </RulerRow>
          <Page>
            <MarginCorners />
            <MarginLine />
            <SubDocument title="This is sub document 2" />
            <SubDocument title="This is sub document 1" />
          </Page>
        </Canvas>
        <ScrollTrack>
          <ScrollThumb />
        </ScrollTrack>
      </WorkArea>

      <StatusBar>
        <StatusCell $w={196} $pad={9}>Page 1 of 1</StatusCell>
        <StatusCell $w={291} $pad={7}>592 words, 3,124 characters</StatusCell>
        <StatusCell $w={41} />
        <StatusCell $w={240} $pad={7}>Default Page Style</StatusCell>
        <StatusCell $w={228} $center>French (France)</StatusCell>
        <StatusCell $w={62} />
        <StatusCell $w={27} $center>
          <svg width="16" height="12" viewBox="0 0 16 12" fill="none" aria-hidden="true">
            <path d="M1 3.500h8v5H1z" fill="#d6eafa" stroke={blue} strokeWidth="1.200" />
            <path d="M10.500 1.500h4M10.500 10.500h4M12.500 1.500v9" stroke={ink} />
          </svg>
        </StatusCell>
        <StatusCell $w={27} $center>
          <svg width="11" height="11" viewBox="0 0 11 11" fill="#f6c9c9" stroke="#cf3f43" strokeWidth="1.200" aria-hidden="true">
            <path d="M1 1h8l1 1v8H1z" />
            <path d="M3 1v3.500h5V1M3 10V6.500h5V10M5 8v2" />
          </svg>
        </StatusCell>
        <StatusCell $w={26} />
        <StatusCell $w={152} $grow />
        <StatusCell $w={70} $pad={10}>
          <ViewButton aria-label="Single-page view" $gap={4}>
            <svg width="10" height="11" viewBox="0 0 10 11"><path d="M1.500 1h4L8.500 4v6h-7z" fill="#fff" stroke={blue} strokeWidth="1.200" /></svg>
          </ViewButton>
          <ViewButton aria-label="Multiple-page view" $gap={4}>
            <svg width="18" height="11" viewBox="0 0 18 11"><path d="M1 1h4L8 4v6H1zM10 1h4l3 3v6h-7z" fill="#fff" stroke={ink} /></svg>
          </ViewButton>
          <ViewButton aria-label="Book view">
            <svg width="17" height="11" viewBox="0 0 17 11"><path d="M8.500 1H4L1.500 4v6h7zM8.500 1H13l2.500 3v6h-7z" fill="#fff" stroke={ink} strokeWidth="1.200" /></svg>
          </ViewButton>
        </StatusCell>
        <StatusCell $w={131} $pad={8}>
          <button aria-label="Zoom out">
            <svg width="9" height="9" viewBox="0 0 9 9"><path d="M0 4.500h9" stroke={ink} strokeWidth="1.800" /></svg>
          </button>
          <Zoom type="range" aria-label="Zoom" defaultValue={50} />
          <button aria-label="Zoom in">
            <svg width="9" height="9" viewBox="0 0 9 9"><path d="M0 4.500h9M4.500 0v9" stroke={ink} strokeWidth="1.800" /></svg>
          </button>
        </StatusCell>
        <StatusCell $w={45} $pad={6}>110%</StatusCell>
      </StatusBar>

      <Navigator aria-label="Navigator">
        <NavTitle>
          <span />
          Navigator
          <button aria-label="Close Navigator">
            <svg width="9" height="9" viewBox="0 0 9 9"><path d="M1 1l7 7M8 1L1 8" stroke="#2e3436" strokeWidth="1.800" /></svg>
          </button>
        </NavTitle>
        <NavTools>
          <NavToolButton aria-label="Toggle Master View" $active><Icon size={16}>{icons.toggleMaster}</Icon></NavToolButton>
          <Rule $width={14} />
          <NavToolButton aria-label="Edit" $narrow><Icon size={16}>{icons.navEdit}</Icon></NavToolButton>
          <NavToolButton aria-label="Update" $narrow><Icon size={16}>{icons.navUpdate}</Icon></NavToolButton>
          <ArrowButton aria-label="Update options" $wide><Arrow width={10} height={6} /></ArrowButton>
          <NavToolButton aria-label="Insert" $narrow><Icon size={16}>{icons.navInsert}</Icon></NavToolButton>
          <ArrowButton aria-label="Insert options" $wide><Arrow width={10} height={6} /></ArrowButton>
          <Rule $width={14} />
          <NavToolButton aria-label="Save Contents as well" $narrow><Icon size={16}>{icons.navSave}</Icon></NavToolButton>
          <Rule $width={12} />
          <NavToolButton aria-label="Move Up" $narrow><Icon size={16}>{icons.moveUp}</Icon></NavToolButton>
          <NavToolButton aria-label="Move Down" $narrow><Icon size={16}>{icons.moveDown}</Icon></NavToolButton>
        </NavTools>
        <NavList>
          <NavRow><LinkIcon />sub-doc2.odt</NavRow>
          <NavRow><LinkIcon />sub-doc1.odt</NavRow>
          <NavRow $selected><span />Text</NavRow>
        </NavList>
      </Navigator>

      <Pointer aria-hidden="true">
        <svg width="14" height="18" viewBox="0 0 14 18" fill="#fafafa" stroke="#6d6d6d" strokeWidth="1.200">
          <path d="M1 1.500C5 2 9 3.500 10.500 6.500c.5 1.500-.5 3 0 4.500l2 3.500c-.5 1-1.500 1-2.500 0l-1.500-1.500-4.500-.5C2 9 1 5 1 1.500z" />
        </svg>
      </Pointer>
    </Desktop>
  );
}
